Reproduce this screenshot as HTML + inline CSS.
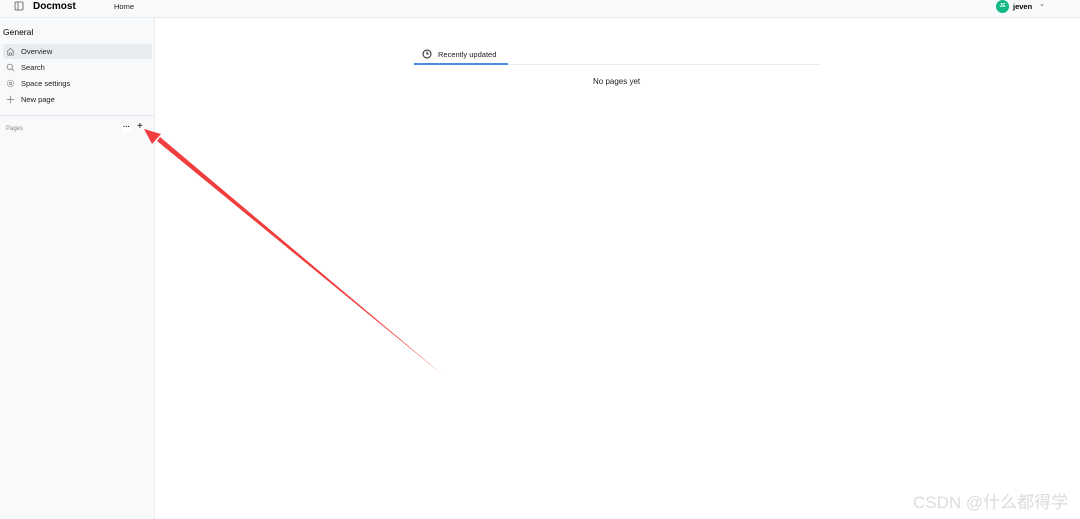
<!DOCTYPE html>
<html><head><meta charset="utf-8"><style>
body{margin:0;width:1080px;height:519px;position:relative;overflow:hidden;background:#fff;font-family:"Liberation Sans","Noto Sans CJK SC",sans-serif;color:#000}
.hdr{position:absolute;left:0;top:0;width:1080px;height:17px;background:#f8f9fa;border-bottom:1px solid #e9ecef}
.side{position:absolute;left:0;top:18px;width:154px;height:501px;background:#f8f9fa;border-right:1px solid #e9ecef}
.t{position:absolute;white-space:nowrap}
.item{position:absolute;left:3px;width:149px;height:15px;font-size:7.5px;line-height:15px;color:#222}
.item span{position:absolute;left:18px}
.ic{position:absolute;left:3px;top:3px;width:9px;height:9px}
</style></head><body>
<div class="hdr">
 <svg class="t" style="left:14px;top:1px" width="10" height="10" viewBox="0 0 10 10"><rect x="1" y="1" width="8" height="8" rx="1" fill="none" stroke="#555" stroke-width="0.8"/><line x1="4" y1="1" x2="4" y2="9" stroke="#555" stroke-width="0.8"/></svg>
 <div class="t" style="left:33px;top:1px;font-size:10px;font-weight:bold">Docmost</div>
 <div class="t" style="left:114px;top:2px;font-size:7.5px;color:#222">Home</div>
 <div class="t" style="left:996px;top:0px;width:13px;height:13px;border-radius:50%;background:#12b886;color:#fff;font-size:5px;line-height:13px;text-align:center;font-weight:bold">JE</div>
 <div class="t" style="left:1013px;top:2px;font-size:7.5px;font-weight:bold">jeven</div>
 <div class="t" style="left:1039px;top:0px;font-size:7px;color:#555">&#8964;</div>
</div>
<div class="side">
 <div class="t" style="left:3px;top:9px;font-size:8.5px;font-weight:500">General</div>
 <div class="item" style="top:26px;background:#e9ecef;border-radius:3px"><svg class="ic" viewBox="0 0 10 10"><path d="M1 5L5 1.5L9 5M2 4.5V9H8V4.5M4 9V6.5H6V9" fill="none" stroke="#777" stroke-width="0.8"/></svg><span>Overview</span></div>
 <div class="item" style="top:42px"><svg class="ic" viewBox="0 0 10 10"><circle cx="4.2" cy="4.2" r="3" fill="none" stroke="#777" stroke-width="0.8"/><line x1="6.4" y1="6.4" x2="9" y2="9" stroke="#777" stroke-width="0.8"/></svg><span>Search</span></div>
 <div class="item" style="top:58px"><svg class="ic" viewBox="0 0 10 10"><circle cx="5" cy="5" r="3.6" fill="none" stroke="#777" stroke-width="0.8" stroke-dasharray="1.2 0.6"/><circle cx="5" cy="5" r="1.3" fill="none" stroke="#777" stroke-width="0.8"/></svg><span>Space settings</span></div>
 <div class="item" style="top:74px"><svg class="ic" viewBox="0 0 10 10"><path d="M5 1V9M1 5H9" stroke="#777" stroke-width="0.8"/></svg><span>New page</span></div>
 <div class="t" style="left:0;top:97px;width:154px;border-top:1px solid #e5e7ea"></div>
 <div class="t" style="left:6px;top:108px;font-size:6px;color:#888">Pages</div>
 <div class="t" style="left:122px;top:107px;width:9px;height:8px;background:#fff;font-size:7px;line-height:5px;text-align:center;font-weight:bold">···</div>
 <div class="t" style="left:137px;top:104px;font-size:10px;line-height:10px">+</div>
</div>
<svg class="t" style="left:421px;top:48px" width="12" height="12" viewBox="0 0 12 12"><circle cx="6" cy="6" r="4" fill="none" stroke="#222" stroke-width="1"/><path d="M6 3.5V6H7.8" fill="none" stroke="#222" stroke-width="1"/></svg>
<div class="t" style="left:438px;top:50px;font-size:7.5px;color:#222">Recently updated</div>
<div class="t" style="left:414px;top:64px;width:407px;height:1px;background:#e9ecef"></div>
<div class="t" style="left:414px;top:63px;width:94px;height:2px;background:#4c8be2"></div>
<div class="t" style="left:593px;top:77px;font-size:8px;color:#222">No pages yet</div>
<svg class="t" style="left:0;top:0" width="1080" height="519"><polygon points="444,376 157,141 160,137" fill="#f03e3e"/><polygon points="144,129 161,134 152,144" fill="#f03e3e"/></svg>
<div class="t" style="left:913px;top:488px;font-size:17px;color:#dcdcdc">CSDN @什么都得学</div>
</body></html>
